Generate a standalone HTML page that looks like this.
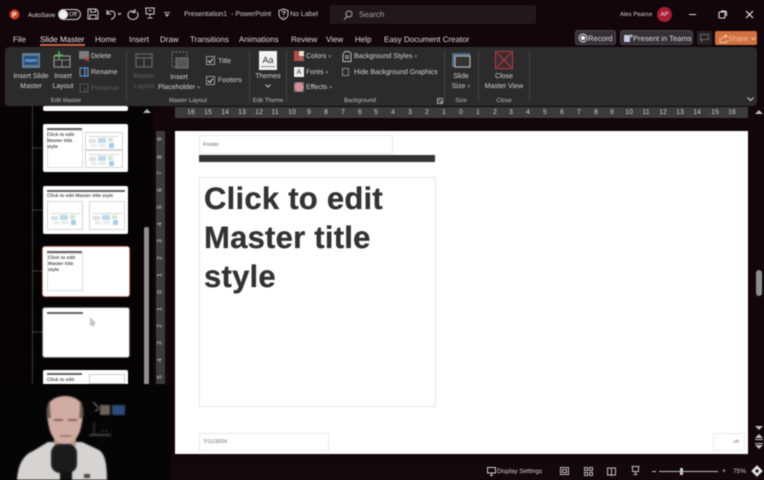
<!DOCTYPE html>
<html><head><meta charset="utf-8">
<style>
html,body{margin:0;padding:0;width:764px;height:480px;overflow:hidden;background:#12060b;font-family:"Liberation Sans",sans-serif;text-rendering:geometricPrecision}
#r{position:relative;width:764px;height:480px;overflow:hidden;background:#12060b;filter:blur(.4px)}
.t{position:absolute;white-space:nowrap;color:#d4d4d4;font-size:7px;line-height:10px;margin-top:.8px}
.c{text-align:center;transform:translateX(-50%)}
.b{position:absolute;box-sizing:border-box}
.m{font-size:8px;top:33px;line-height:11px;color:#dcdcdc}
.g{font-size:6px;color:#bdbdbd;top:96px;margin-top:0}
.k{font-size:5px}
svg{position:absolute;overflow:visible}
.th{position:absolute;background:#fff;border-radius:2px;overflow:hidden;box-sizing:border-box}
.sep{position:absolute;top:50px;height:52px;width:1px;background:#444}
.rn{position:absolute;top:108px;font-size:7px;line-height:9px;color:#ccc;transform:translateX(-50%)}
.vn{position:absolute;left:156px;width:9px;text-align:center;font-size:6.5px;line-height:8px;color:#ccc;transform:rotate(-90deg)}
.im{position:absolute;box-sizing:border-box;border:.5px solid #d4d4d4;background:#fff;overflow:hidden}
.im svg{opacity:.75}
</style></head><body><div id="r">

<svg width="0" height="0" style="left:0;top:0"><defs><g id="dg"><rect x="3" y="3" width="30" height="1" fill="#ccc"/><rect x="3" y="6" width="7" height="4" fill="#cfd8de"/><rect x="12" y="5" width="8" height="5" fill="#a9cbe6"/><rect x="22" y="5" width="5" height="4" fill="#bfe0bb"/><rect x="5" y="11" width="6" height="3" fill="#dfe5e9"/><rect x="13" y="11" width="7" height="3" fill="#e0e4e6"/><rect x="23" y="10" width="5" height="5" fill="#8fbbdc"/></g></defs></svg>

<!-- left panel & webcam -->
<div class="b" style="left:0;top:107px;width:153px;height:373px;background:#060304"></div>

<!-- title bar -->
<svg style="left:9px;top:9px" width="11" height="11"><circle cx="5.500" cy="5.500" r="5" fill="#c8412a"/><text x="3" y="8" font-size="7" font-weight="bold" fill="#fff" font-family="Liberation Sans">P</text></svg>
<div class="t" style="left:28px;top:10px;font-size:6.300px;color:#ddd">AutoSave</div>
<div class="b" style="left:58px;top:9px;width:23px;height:11px;border:1px solid #ccc;border-radius:6px;background:#1a1013"></div>
<div class="b" style="left:59px;top:10px;width:9px;height:9px;border-radius:50%;background:#f0f0f0"></div>
<div class="t" style="left:69px;top:9.500px;font-size:6px;color:#ddd">Off</div>
<svg style="left:87px;top:8px" width="12" height="12" fill="none" stroke="#ccc" stroke-width="1"><path d="M1 1h8l2 2v8H1zM3.500 1v3h5V1M3 11V7h6v4"/></svg>
<svg style="left:105px;top:8px" width="16" height="12" fill="none" stroke="#ccc" stroke-width="1.100"><path d="M2 2v4h4M2 6c2-4 8-4 8 1 0 2-2 3.500-4 4.500M13 5l1.500 1.500L16 5"/></svg>
<svg style="left:127px;top:8px" width="12" height="12" fill="none" stroke="#ccc" stroke-width="1.100"><path d="M8 1v3.500H4.500M8 4C4 1.500 1 4 1 7s2.500 4.500 5 4.500 5-2 5-4.500c0-1.500-.5-2.500-1-3"/></svg>
<svg style="left:144px;top:7px" width="12" height="12" fill="none" stroke="#ccc" stroke-width="1"><path d="M1 1h10M2 1v6h8V1M6 7v3M3.500 11h5M4.500 3.500h3"/></svg>
<svg style="left:164px;top:12px" width="6" height="5" fill="#aaa"><path d="M0 0h6v1H0zM0.500 2h5L3 5z"/></svg>
<div class="t" style="left:184px;top:9px;font-size:7px;color:#cfcfcf">Presentation1 &nbsp;-&nbsp;PowerPoint</div>
<svg style="left:278px;top:8px" width="11" height="12" fill="none" stroke="#ccc" stroke-width="1"><path d="M5.500 1l4.500 1.500v4c0 2.500-2 4-4.500 5-2.500-1-4.500-2.500-4.500-5v-4zM4 4.500c.5-1.500 3-1.500 3 0 0 1-1.500 1-1.500 2.500M5.500 8.500v1"/></svg>
<div class="t" style="left:290px;top:9px;font-size:7px;color:#cfcfcf">No Label</div>
<div class="b" style="left:330px;top:5px;width:206px;height:19px;background:#21181c;border-radius:2px"></div>
<svg style="left:343px;top:10px" width="10" height="10" fill="none" stroke="#aaa" stroke-width="1"><circle cx="6" cy="4" r="3"/><path d="M4 6.500L1 9.500"/></svg>
<div class="t" style="left:359px;top:9px;font-size:8px;color:#a8a4a5">Search</div>
<div class="t" style="left:620px;top:9.500px;font-size:6px;color:#d4d4d4">Alex Pearce</div>
<div class="b" style="left:657px;top:7px;width:15px;height:15px;border-radius:50%;background:#a81c36"></div>
<div class="t c" style="left:664.500px;top:9.500px;font-size:6px;color:#eee">AP</div>
<div class="b" style="left:689px;top:14px;width:7px;height:1px;background:#ddd"></div>
<svg style="left:718px;top:10px" width="9" height="9" fill="none" stroke="#ddd" stroke-width="1.100"><rect x="1" y="2" width="6" height="6" rx="1"/><path d="M3 1h4a1.500 1.500 0 0 1 1.500 1.500V6"/></svg>
<svg style="left:745px;top:10px" width="9" height="9" stroke="#eee" stroke-width="1.100"><path d="M1 1l7 7M8 1L1 8"/></svg>

<!-- menu -->
<div class="t m" style="left:13px">File</div>
<div class="t m" style="left:40px;color:#ececec">Slide Master</div>
<div class="b" style="left:40px;top:44px;width:45px;height:1.500px;background:#c4674a"></div>
<div class="t m" style="left:95px">Home</div>
<div class="t m" style="left:129px">Insert</div>
<div class="t m" style="left:160px">Draw</div>
<div class="t m" style="left:190px">Transitions</div>
<div class="t m" style="left:239px">Animations</div>
<div class="t m" style="left:291px">Review</div>
<div class="t m" style="left:326px">View</div>
<div class="t m" style="left:355px">Help</div>
<div class="t m" style="left:384px">Easy Document Creator</div>

<div class="b" style="left:575px;top:30px;width:41px;height:15px;background:#343033;border:1px solid #4a4648;border-radius:3px"></div>
<svg style="left:578px;top:33px" width="10" height="10"><circle cx="5" cy="5" r="4" fill="none" stroke="#ddd"/><circle cx="5" cy="5" r="2.300" fill="#eee"/></svg>
<div class="t" style="left:588px;top:33px;font-size:7.600px;color:#ddd">Record</div>
<div class="b" style="left:620px;top:30px;width:73px;height:15px;background:#343033;border:1px solid #4a4648;border-radius:3px"></div>
<svg style="left:623px;top:33px" width="10" height="10"><rect x="1" y="2" width="6" height="7" fill="#c8c8e0"/><circle cx="8" cy="3" r="1.800" fill="#9a9ac4"/></svg>
<div class="t" style="left:633px;top:33px;font-size:7.600px;color:#ddd">Present in Teams</div>
<div class="b" style="left:697px;top:31px;width:15px;height:14px;background:#262124;border-radius:2px"></div>
<svg style="left:700px;top:34px" width="9" height="8" fill="none" stroke="#666"><path d="M.5.500h8v5H3L1.500 7.500V5.500h-1z"/></svg>
<div class="b" style="left:715px;top:31px;width:42px;height:14px;background:#d0703f;border-radius:2px"></div>
<svg style="left:719px;top:34px" width="9" height="9" fill="none" stroke="#f0c5a8"><path d="M1 4v4.500h6.500V6M3 5c0-2 2-3 4-3M6 .5L8 2 6 4"/></svg>
<div class="t" style="left:728px;top:33px;font-size:7.600px;color:#f3c6a8">Share</div>
<svg style="left:751px;top:37px" width="5" height="3" fill="none" stroke="#f3c6a8"><path d="M.5.500L2.500 2.500 4.500.5"/></svg>

<!-- horizontal ruler -->
<div class="b" style="left:175px;top:107px;width:573px;height:11px;background:#3c3b3c"></div>
<div>
<span class="rn" style="left:191px">16</span><span class="rn" style="left:208px">15</span><span class="rn" style="left:225px">14</span><span class="rn" style="left:242px">13</span><span class="rn" style="left:259px">12</span><span class="rn" style="left:275px">11</span><span class="rn" style="left:292px">10</span><span class="rn" style="left:309px">9</span><span class="rn" style="left:326px">8</span><span class="rn" style="left:343px">7</span><span class="rn" style="left:360px">6</span><span class="rn" style="left:376px">5</span><span class="rn" style="left:393px">4</span><span class="rn" style="left:410px">3</span><span class="rn" style="left:427px">2</span><span class="rn" style="left:444px">1</span><span class="rn" style="left:461px">0</span><span class="rn" style="left:478px">1</span><span class="rn" style="left:495px">2</span><span class="rn" style="left:511px">3</span><span class="rn" style="left:528px">4</span><span class="rn" style="left:545px">5</span><span class="rn" style="left:562px">6</span><span class="rn" style="left:579px">7</span><span class="rn" style="left:596px">8</span><span class="rn" style="left:612px">9</span><span class="rn" style="left:629px">10</span><span class="rn" style="left:646px">11</span><span class="rn" style="left:663px">12</span><span class="rn" style="left:680px">13</span><span class="rn" style="left:697px">14</span><span class="rn" style="left:715px">15</span><span class="rn" style="left:732px">16</span>
</div>

<!-- vertical ruler -->
<div class="b" style="left:156px;top:131px;width:9px;height:254px;background:#3c3b3c"></div>
<span class="vn" style="top:135px">9</span><span class="vn" style="top:153px">8</span><span class="vn" style="top:169px">7</span><span class="vn" style="top:186px">6</span><span class="vn" style="top:203px">5</span><span class="vn" style="top:220px">4</span><span class="vn" style="top:237px">3</span><span class="vn" style="top:254px">2</span><span class="vn" style="top:271px">1</span><span class="vn" style="top:288px">0</span><span class="vn" style="top:305px">1</span><span class="vn" style="top:322px">2</span><span class="vn" style="top:339px">3</span><span class="vn" style="top:356px">4</span><span class="vn" style="top:373px">5</span>

<!-- slide -->
<div class="b" style="left:175px;top:131px;width:573px;height:323px;background:#fff"></div>
<div class="b" style="left:199px;top:135px;width:194px;height:19px;border:1px solid #e8e8e8"></div>
<div class="t" style="left:203px;top:139px;font-size:5.500px;color:#666">Footer</div>
<div class="b" style="left:199px;top:155px;width:236px;height:7px;background:#333"></div>
<div class="b" style="left:199px;top:177px;width:237px;height:230px;border:1px solid #e6e6e6"></div>
<div class="t" style="left:204px;top:179px;margin-top:0;font-size:31px;line-height:39px;font-weight:bold;color:#333;letter-spacing:.25px;-webkit-text-stroke:.3px #333">Click to edit<br>Master title<br>style</div>
<div class="b" style="left:199px;top:433px;width:130px;height:18px;border:1px solid #e8e8e8"></div>
<div class="t" style="left:203px;top:436px;font-size:5.500px;color:#666">7/11/2024</div>
<div class="b" style="left:713px;top:433px;width:32px;height:18px;border:1px solid #e8e8e8"></div>
<div class="t" style="left:733px;top:436px;font-size:5.500px;color:#666">‹#›</div>

<!-- right scroll -->
<svg style="left:755px;top:110px" width="8" height="5" fill="#bbb"><path d="M4 0l4 4H0z"/></svg>
<div class="b" style="left:756px;top:270px;width:6px;height:26px;background:#8c8c8c;border-radius:3px"></div>
<svg style="left:755px;top:426px" width="8" height="28" fill="#bbb"><path d="M0 0h8L4 4zM4 8l4 4H0zM0 13h8v1H0zM0 17h8v1H0zM0 19h8l-4 4z"/></svg>

<!-- thumbnails panel -->
<svg style="left:32px;top:107px" width="10" height="277" stroke="#888" stroke-dasharray="1 1.500"><path d="M.5 0v277M1 41h9M1 103h9M1 164h9M1 225h9"/></svg>
<svg style="left:143px;top:109px" width="8" height="5" fill="#bbb"><path d="M4 0l4 4H0z"/></svg>
<div class="b" style="left:144px;top:227px;width:5px;height:157px;background:#8f8f8f;border-radius:2px 2px 0 0"></div>

<div class="th" style="left:43px;top:106px;width:85px;height:5px"></div>

<div class="th" style="left:43px;top:124px;width:85px;height:48px">
 <div class="b" style="left:4px;top:4px;width:35px;height:1.500px;background:#666"></div>
 <div class="b" style="left:4px;top:6px;width:36px;height:38px;border:.5px solid #ddd"></div>
 <div class="t" style="left:4px;top:8px;font-size:4.800px;line-height:6px;font-weight:bold;color:#555">Click to edit<br>Master title<br>style</div>
 <div class="im" style="left:42px;top:8px;width:38px;height:18px"><svg width="38" height="18"><use href="#dg"/></svg></div>
 <div class="im" style="left:42px;top:26px;width:38px;height:18px"><svg width="38" height="18"><use href="#dg"/></svg></div>
</div>

<div class="th" style="left:43px;top:186px;width:85px;height:48px">
 <div class="b" style="left:4px;top:4px;width:78px;height:1.500px;background:#666"></div>
 <div class="t" style="left:4px;top:7px;font-size:4.800px;line-height:6px;font-weight:bold;color:#555">Click to edit Master title style</div>
 <div class="im" style="left:4px;top:15px;width:36px;height:29px"><svg width="36" height="29" style="top:8px"><use href="#dg"/></svg></div>
 <div class="im" style="left:46px;top:15px;width:36px;height:29px"><svg width="36" height="29" style="top:8px"><use href="#dg"/></svg></div>
</div>

<div class="th" style="left:42px;top:246px;width:88px;height:51px;border:1.500px solid #c98a7a;border-radius:3px">
 <div class="b" style="left:4px;top:4px;width:35px;height:1.500px;background:#666"></div>
 <div class="b" style="left:4px;top:6px;width:36px;height:38px;border:.5px solid #ddd"></div>
 <div class="t" style="left:5px;top:8px;font-size:4.800px;line-height:6px;font-weight:bold;color:#555">Click to edit<br>Master title<br>style</div>
</div>

<div class="th" style="left:42px;top:307px;width:88px;height:51px;border:1.500px solid #6a6a6a;border-radius:3px">
 <div class="b" style="left:4px;top:4px;width:36px;height:1.500px;background:#666"></div>
 <svg style="left:47px;top:10px" width="6" height="9" fill="#ddd" stroke="#999" stroke-width=".6"><path d="M.5.500v6.500l1.500-1.500 1 2.500 1-.5-1-2.500h2z"/></svg>
</div>

<div class="th" style="left:43px;top:370px;width:85px;height:14px;border-radius:2px 2px 0 0">
 <div class="b" style="left:4px;top:3px;width:35px;height:1.500px;background:#666"></div>
 <div class="t" style="left:4px;top:7px;font-size:4.800px;line-height:6px;font-weight:bold;color:#555">Click to edit</div>
 <div class="b" style="left:46px;top:4px;width:36px;height:10px;border:.5px solid #ccc"></div>
</div>

<!-- ribbon -->
<div class="b" style="left:5px;top:47px;width:752px;height:59px;background:#2b2b2c;border-radius:4px"></div>
<div class="sep" style="left:126px"></div><div class="sep" style="left:249px"></div><div class="sep" style="left:286px"></div><div class="sep" style="left:444px"></div><div class="sep" style="left:478px"></div><div class="sep" style="left:529px"></div>

<!-- Edit master -->
<svg style="left:22px;top:53px" width="18" height="15"><rect x="0" y="0" width="18" height="15" fill="#5d7c96"/><rect x="2" y="3" width="14" height="9" fill="#2f4d6e"/><rect x="3" y="6" width="12" height="3" fill="#4a8bd0"/></svg>
<svg style="left:53px;top:50px" width="19" height="18" fill="none"><rect x="1" y="6" width="16" height="11" stroke="#8a8a8a" stroke-width="1.300"/><path d="M1 10h16M9 10v7" stroke="#8a8a8a"/><path d="M6 1v8M2 5h8" stroke="#5cae5c" stroke-width="1.500"/></svg>
<div class="t c" style="left:31px;top:71px;line-height:10px;text-align:center">Insert Slide<br>Master</div>
<div class="t c" style="left:63px;top:71px;line-height:10px;text-align:center">Insert<br>Layout</div>
<svg style="left:79px;top:51px" width="11" height="10"><rect x="0" y="0" width="10" height="8" fill="#7c7c7c"/><path d="M6 6l4 4M10 6l-4 4" stroke="#cc4444" stroke-width="1.200"/></svg>
<div class="t" style="left:91px;top:51px">Delete</div>
<svg style="left:79px;top:67px" width="11" height="10" fill="none"><rect x="1" y="1" width="8" height="8" stroke="#6f8fb0" stroke-width="1.200"/><path d="M6 0v10" stroke="#4a8bd0" stroke-width="1.500"/></svg>
<div class="t" style="left:91px;top:67px">Rename</div>
<svg style="left:79px;top:83px" width="11" height="10" fill="none" stroke="#555"><rect x="1" y="1" width="8" height="8"/><path d="M6 5v4"/></svg>
<div class="t" style="left:91px;top:83px;color:#5e5e5e">Preserve</div>
<div class="t g c" style="left:66px">Edit Master</div>

<!-- Master layout -->
<svg style="left:135px;top:53px" width="18" height="15" fill="none" stroke="#666" stroke-width="1.200"><rect x="1" y="1" width="16" height="13"/><path d="M1 5h16M9 5v9"/></svg>
<div class="t c" style="left:144px;top:71px;line-height:10px;text-align:center;color:#5e5e5e">Master<br>Layout</div>
<svg style="left:171px;top:51px" width="18" height="18" fill="none" stroke="#777"><rect x="1" y="1" width="15" height="15" stroke-dasharray="2 1.500"/><rect x="5" y="7" width="12" height="10" fill="#555"/></svg>
<div class="t c" style="left:179px;top:72px;line-height:10px;text-align:center">Insert<br>Placeholder <span class="k">˅</span></div>
<svg style="left:206px;top:56px" width="10" height="10" fill="none"><rect x=".5" y=".5" width="8" height="8" stroke="#999"/><path d="M2 4.500l2 2 3-4" stroke="#ddd"/></svg>
<div class="t" style="left:218px;top:56px">Title</div>
<svg style="left:206px;top:76px" width="10" height="10" fill="none"><rect x=".5" y=".5" width="8" height="8" stroke="#999"/><path d="M2 4.500l2 2 3-4" stroke="#ddd"/></svg>
<div class="t" style="left:218px;top:75px">Footers</div>
<div class="t g c" style="left:188px">Master Layout</div>

<!-- Themes -->
<div class="b" style="left:259px;top:51px;width:18px;height:19px;background:#f2f2f2"></div>
<div class="t c" style="left:268px;top:54px;font-size:9px;color:#333">Aa</div>
<div class="b" style="left:261px;top:66px;width:14px;height:1px;background:#888"></div>
<div class="t c" style="left:268px;top:71px">Themes</div>
<svg style="left:265px;top:84px" width="6" height="4" fill="none" stroke="#ccc"><path d="M.5.500l2.500 2.500L5.500.5"/></svg>
<div class="t g c" style="left:268px">Edit Theme</div>

<!-- Background -->
<svg style="left:294px;top:51px" width="10" height="10"><rect width="5" height="10" fill="#b84a4a"/><rect x="5" width="5" height="5" fill="#e8e0d0"/><rect x="5" y="5" width="5" height="5" fill="#a06060"/></svg>
<div class="t" style="left:306px;top:51px">Colors <span class="k">˅</span></div>
<div class="b" style="left:294px;top:67px;width:10px;height:10px;background:#eee"></div>
<div class="t c" style="left:299px;top:67px;color:#333">A</div>
<div class="t" style="left:306px;top:67px">Fonts <span class="k">˅</span></div>
<svg style="left:294px;top:82px" width="10" height="10"><rect width="10" height="10" rx="1" fill="#777"/><circle cx="5" cy="5" r="4.500" fill="#d88c96"/></svg>
<div class="t" style="left:306px;top:82px">Effects <span class="k">˅</span></div>
<svg style="left:342px;top:51px" width="10" height="11" fill="none" stroke="#bbb"><path d="M3 .5h4l2 2v8H1v-7z"/><path d="M3 5h4M3 7h4"/></svg>
<div class="t" style="left:354px;top:51px">Background Styles <span class="k">˅</span></div>
<div class="b" style="left:342px;top:68px;width:7px;height:8px;border:1px solid #888"></div>
<div class="t" style="left:354px;top:67px">Hide Background Graphics</div>
<div class="t g c" style="left:360px">Background</div>
<svg style="left:437px;top:98px" width="6" height="6" fill="none" stroke="#aaa"><rect x=".5" y=".5" width="5" height="5"/><path d="M2 2l3 3"/></svg>

<!-- Size / close -->
<svg style="left:452px;top:52px" width="20" height="17" fill="none"><rect x="0" y="1" width="18" height="14" fill="#4f6c85"/><rect x="3" y="4" width="15" height="11" fill="#333" stroke="#aaa" stroke-width="1.300"/></svg>
<div class="t c" style="left:461px;top:71px;line-height:10px;text-align:center">Slide<br>Size <span class="k">˅</span></div>
<div class="t g c" style="left:461px">Size</div>
<svg style="left:495px;top:51px" width="18" height="18" fill="none" stroke="#b04048" stroke-width="1"><rect x=".5" y=".5" width="17" height="17" fill="#3e2a2c"/><path d="M2 2l14 14M16 2L2 16"/></svg>
<div class="t c" style="left:504px;top:71px;line-height:10px;text-align:center">Close<br>Master View</div>
<div class="t g c" style="left:504px">Close</div>
<svg style="left:747px;top:97px" width="7" height="4" fill="none" stroke="#ccc" stroke-width="1.100"><path d="M.5.500L3.500 3.500 6.500.5"/></svg>

<!-- webcam -->
<div class="b" style="left:0;top:384px;width:171px;height:96px;background:#050505"></div>
<svg style="left:0;top:384px;filter:blur(.7px)" width="171" height="96">
 <rect x="100" y="21" width="10" height="10" fill="#6b6258"/><rect x="112" y="21" width="13" height="10" fill="#2d4a7a"/>
 <path d="M93 18l6 6M95 27l4-2" stroke="#888"/>
 <path d="M94 38v12" stroke="#333" stroke-width="1.500"/>
 <path d="M102 47h1M106 47h1" stroke="#555" stroke-width="2"/>
 <rect x="89" y="50" width="22" height="2" fill="#444"/>
 <path d="M17 96c1-15 6-25 16-29l15-9h34l17 8c6 4 8 14 8 30z" fill="#d6d4d3"/>
 <path d="M54 46h22v16H54z" fill="#b99187"/>
 <path d="M47 27c0-10 8-15 18-15s18 5 18 15c0 6-1 13-3 20-3 9-9 13-15 13s-12-4-15-13c-2-7-3-14-3-20z" fill="#d0aca2"/>
 <path d="M47 34c-1-7 0-14 3-18 0 6 0 12 1 18zM83 34c1-7 0-14-3-18 0 6 0 12-1 18z" fill="#6f5c52"/>
 <path d="M54 36h9M68 36h9" stroke="#6a4a42" stroke-width="1.500"/>
 <path d="M60 52h11" stroke="#8a5a55" stroke-width="1.200"/>
 <rect x="51" y="60" width="26" height="29" rx="9" fill="#1b1b1d"/>
 <rect x="60" y="88" width="12" height="8" fill="#111"/>
 <rect x="84" y="90" width="6" height="4" fill="#444"/>
</svg>

<!-- status bar -->
<div class="b" style="left:171px;top:463px;width:593px;height:17px;background:#14080d"></div>
<svg style="left:487px;top:467px" width="10" height="9" fill="none" stroke="#ccc"><rect x=".5" y=".5" width="8" height="5.500"/><path d="M3 8.500h3M4.500 6v2.500"/></svg>
<div class="t" style="left:497px;top:466px;font-size:6.300px;color:#cfcfcf">Display Settings</div>
<svg style="left:560px;top:467px" width="9" height="9" fill="none" stroke="#bbb"><rect x=".5" y=".5" width="8" height="7"/><rect x="2.500" y="2.500" width="4" height="3"/></svg>
<svg style="left:584px;top:467px" width="9" height="9" fill="none" stroke="#bbb"><rect x=".5" y=".5" width="3" height="3"/><rect x="5.500" y=".5" width="3" height="3"/><rect x=".5" y="5.500" width="3" height="3"/><rect x="5.500" y="5.500" width="3" height="3"/></svg>
<svg style="left:607px;top:467px" width="9" height="9" fill="none" stroke="#bbb"><path d="M.5 1h3.500l.5.500.5-.5h3.500v7h-3.500l-.5.500-.5-.5H.5zM4.500 1.500v6.500"/></svg>
<svg style="left:631px;top:466px" width="9" height="10" fill="none" stroke="#bbb"><path d="M.5.500h8M1.500.5v5h6v-5M4.500 5.500v2.500M2.500 8.500h4"/></svg>
<div class="b" style="left:652px;top:471px;width:4px;height:1px;background:#bbb"></div>
<div class="b" style="left:659px;top:471px;width:59px;height:1px;background:#bbb"></div>
<div class="b" style="left:680px;top:468px;width:3px;height:7px;background:#ccc"></div>
<div class="t" style="left:722px;top:466px;font-size:7px;color:#ccc">+</div>
<div class="t" style="left:733px;top:466px;font-size:6.500px;color:#cfcfcf">75%</div>
<svg style="left:752px;top:466px" width="10" height="10" fill="none" stroke="#ddd" stroke-width="1.200"><path d="M5 0l2 2H3zM5 10l2-2H3zM0 5l2-2v4zM10 5L8 3v4z" fill="#ddd"/><rect x="3" y="3" width="4" height="4"/></svg>
</div></body></html>
